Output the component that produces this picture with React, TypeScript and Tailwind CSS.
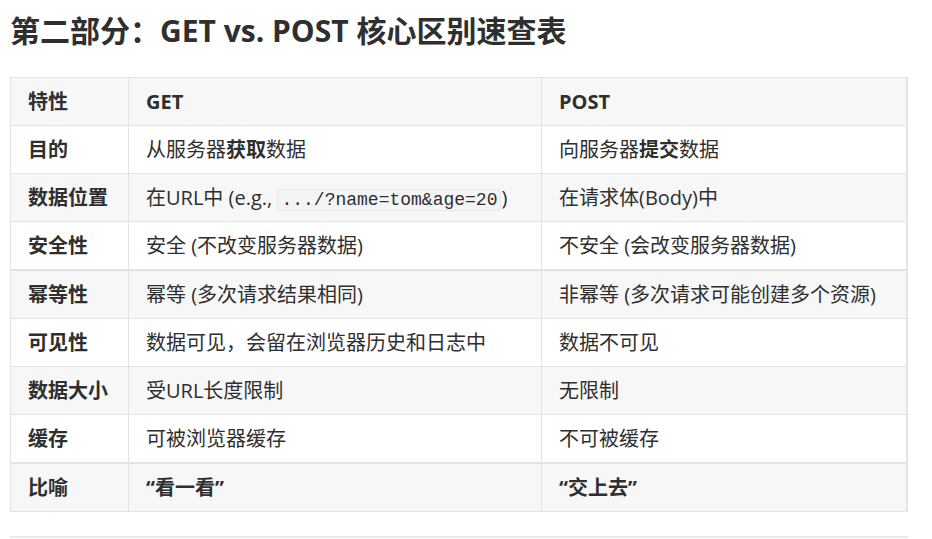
const rows: { name: string; get: React.ReactNode; post: React.ReactNode; thick?: boolean; bold?: boolean }[] = [
  {
    name: "目的",
    get: (
      <>
        从服务器<b className="font-bold">获取</b>数据
      </>
    ),
    post: (
      <>
        向服务器<b className="font-bold">提交</b>数据
      </>
    ),
  },
  {
    name: "数据位置",
    get: (
      <span className="whitespace-nowrap">
        在URL中 (e.g.,{" "}
        <code className="font-['Liberation_Mono',monospace] text-[18px] leading-[18px] bg-[#f3f4f4] border border-[#e6e8ea] rounded px-[3px]">
          .../?name=tom&amp;age=20
        </code>
        )
      </span>
    ),
    post: "在请求体(Body)中",
  },
  { name: "安全性", get: "安全 (不改变服务器数据)", post: "不安全 (会改变服务器数据)" },
  {
    name: "幂等性",
    get: "幂等 (多次请求结果相同)",
    post: "非幂等 (多次请求可能创建多个资源)",
    thick: true,
  },
  { name: "可见性", get: "数据可见，会留在浏览器历史和日志中", post: "数据不可见" },
  { name: "数据大小", get: "受URL长度限制", post: "无限制" },
  { name: "缓存", get: "可被浏览器缓存", post: "不可被缓存" },
  { name: "比喻", get: "“看一看”", post: "“交上去”", thick: true, bold: true },
];

const cell = "border border-[#e1e3e6] px-[17px] py-3 leading-[23px] text-left align-middle";

export default function App() {
  return (
    <div className="min-h-[539px] bg-white text-[#2f2f2f] font-['Open_Sans','Noto_Sans_CJK_SC',sans-serif] text-[20px] px-[10px] pt-[13px]">
      <h2 className="text-[30px] font-bold leading-[36px] mb-[28px]">
        第二部分：GET vs. POST 核心区别速查表
      </h2>

      <table className="w-[898px] border-collapse border-r-2 border-r-[#e1e3e6]">
        <colgroup>
          <col className="w-[118px]" />
          <col className="w-[413px]" />
          <col />
        </colgroup>
        <thead>
          <tr className="bg-[#f7f7f7]">
            <th className={`${cell} font-bold`}>特性</th>
            <th className={`${cell} font-bold`}>GET</th>
            <th className={`${cell} font-bold border-r-2`}>POST</th>
          </tr>
        </thead>
        <tbody>
          {rows.map((r, i) => (
            <tr
              key={r.name}
              className={`${i % 2 === 1 ? "bg-[#f7f7f7]" : "bg-white"} ${r.thick ? "border-t-2 border-t-[#e1e3e6]" : ""}`}
            >
              <td className={`${cell} font-bold ${r.thick ? "border-t-2" : ""}`}>{r.name}</td>
              <td className={`${cell} ${r.bold ? "font-bold" : ""} ${r.thick ? "border-t-2" : ""}`}>{r.get}</td>
              <td className={`${cell} border-r-2 ${r.bold ? "font-bold" : ""} ${r.thick ? "border-t-2" : ""}`}>{r.post}</td>
            </tr>
          ))}
        </tbody>
      </table>

      <div className="w-[898px] h-[2px] bg-[#e8e9eb] mt-[24px]" />
    </div>
  );
}
